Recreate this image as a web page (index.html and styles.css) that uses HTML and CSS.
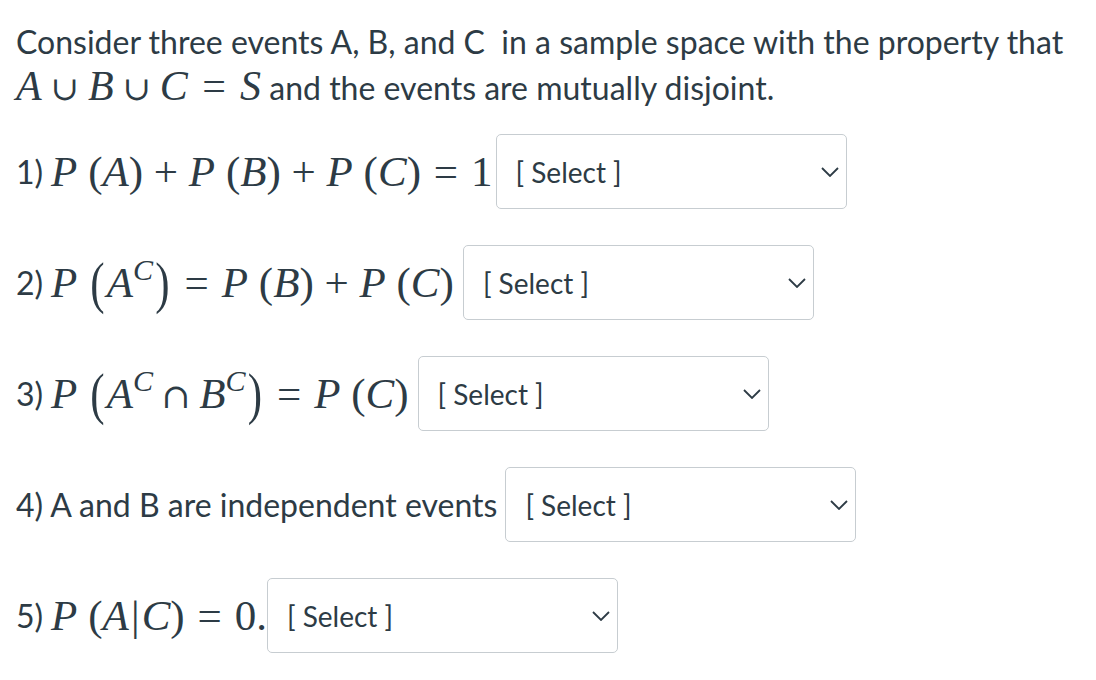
FILE: index.html
```html
<!DOCTYPE html>
<html lang="en">
<head>
<meta charset="utf-8">
<title>Question</title>
<link rel="stylesheet" href="styles.css">
</head>
<body>
<div class="question">
  <p class="intro">Consider three events A, B, and C&nbsp; in a sample space with the property that <span class="m m-inline"><span class="mi">A</span><span class="bin cup">∪</span><span class="mi">B</span><span class="bin cup">∪</span><span class="mi">C</span><span class="rel">=</span><span class="mi">S</span></span> and the events are mutually disjoint.</p>

  <div class="items">
    <div class="item">
      <span class="label">1)</span>
      <span class="m"><span class="mi fn">P</span><span class="pa">(</span><span class="mi">A</span><span class="pa">)</span><span class="bin">+</span><span class="mi fn">P</span><span class="pa">(</span><span class="mi">B</span><span class="pa">)</span><span class="bin">+</span><span class="mi fn">P</span><span class="pa">(</span><span class="mi">C</span><span class="pa">)</span><span class="rel">=</span><span class="num">1</span></span>
      <div class="select"><span>[ Select ]</span><svg class="chev" width="18" height="10" viewBox="0 0 18 10"><path d="M1 1l8 8 8-8" fill="none" stroke="#2d3b45" stroke-width="1.8"/></svg></div>
    </div>

    <div class="item">
      <span class="label">2)</span>
      <span class="m m-tail"><span class="mi fn">P</span><span class="pa big">(</span><span class="mi">A</span><sup class="sup">C</sup><span class="pa big">)</span><span class="rel">=</span><span class="mi fn">P</span><span class="pa">(</span><span class="mi">B</span><span class="pa">)</span><span class="bin">+</span><span class="mi fn">P</span><span class="pa">(</span><span class="mi">C</span><span class="pa">)</span></span>
      <div class="select"><span>[ Select ]</span><svg class="chev" width="18" height="10" viewBox="0 0 18 10"><path d="M1 1l8 8 8-8" fill="none" stroke="#2d3b45" stroke-width="1.8"/></svg></div>
    </div>

    <div class="item">
      <span class="label">3)</span>
      <span class="m m-tail"><span class="mi fn">P</span><span class="pa big">(</span><span class="mi">A</span><sup class="sup">C</sup><span class="bin cap">∩</span><span class="mi">B</span><sup class="sup">C</sup><span class="pa big">)</span><span class="rel">=</span><span class="mi fn">P</span><span class="pa">(</span><span class="mi">C</span><span class="pa">)</span></span>
      <div class="select"><span>[ Select ]</span><svg class="chev" width="18" height="10" viewBox="0 0 18 10"><path d="M1 1l8 8 8-8" fill="none" stroke="#2d3b45" stroke-width="1.8"/></svg></div>
    </div>

    <div class="item">
      <span class="label">4) A and B are independent events</span>
      <div class="select"><span>[ Select ]</span><svg class="chev" width="18" height="10" viewBox="0 0 18 10"><path d="M1 1l8 8 8-8" fill="none" stroke="#2d3b45" stroke-width="1.8"/></svg></div>
    </div>

    <div class="item">
      <span class="label">5)</span>
      <span class="m m-tight"><span class="mi fn">P</span><span class="pa">(</span><span class="mi">A</span><span class="bar">|</span><span class="mi">C</span><span class="pa">)</span><span class="rel">=</span><span class="num">0.</span></span>
      <div class="select"><span>[ Select ]</span><svg class="chev" width="18" height="10" viewBox="0 0 18 10"><path d="M1 1l8 8 8-8" fill="none" stroke="#2d3b45" stroke-width="1.8"/></svg></div>
    </div>
  </div>
</div>
</body>
</html>
```

FILE: styles.css
```css
html, body {
  margin: 0;
  padding: 0;
  background: #ffffff;
}

body {
  color: #2d3b45;
  font-family: Lato, "Noto Sans", "Liberation Sans", sans-serif;
}

.question {
  padding: 19px 16px 0 16px;
}

.intro {
  margin: 0;
  font-size: 32px;
  line-height: 46px;
}

.items {
  display: flex;
  flex-direction: column;
  gap: 36px;
  margin-top: 23px;
}

.item {
  display: flex;
  align-items: center;
  height: 75px;
  font-size: 32px;
}

.label {
  margin-right: 8px;
  white-space: nowrap;
}

.m {
  font-family: "Liberation Serif", "DejaVu Serif", serif;
  font-size: 43px;
  white-space: nowrap;
  line-height: 1;
  margin-right: 3px;
}

.m-tail {
  margin-right: 9px;
}

.m-tight {
  margin-right: 0;
}

.m-inline {
  font-size: 42px;
  margin-right: 0;
}

.m-inline .rel {
  margin: 0 0.34em;
}

.m-inline .cup {
  margin: 0 0.27em;
}

.mi {
  font-style: italic;
}

.fn {
  margin-right: 0.25em;
}

.pa {
  display: inline-block;
}

.pa.big {
  transform: scaleY(1.35);
  margin: 0 0.05em;
}

.bin {
  margin: 0 0.25em;
}

.cup, .cap {
  font-family: "DejaVu Serif", serif;
  font-size: 0.8em;
}

.rel {
  margin: 0 0.3em;
}

.sup {
  font-style: italic;
  font-size: 0.7em;
  vertical-align: 0.55em;
  line-height: 0;
}

.bar {
  margin: 0 0.05em;
}

.select {
  box-sizing: border-box;
  width: 351px;
  height: 75px;
  flex: none;
  border: 1px solid #c7cdd1;
  border-radius: 5px;
  display: flex;
  align-items: center;
  justify-content: space-between;
  padding: 0 7px 0 19px;
  font-size: 28px;
  background: #ffffff;
}

.chev {
  display: block;
}
```
